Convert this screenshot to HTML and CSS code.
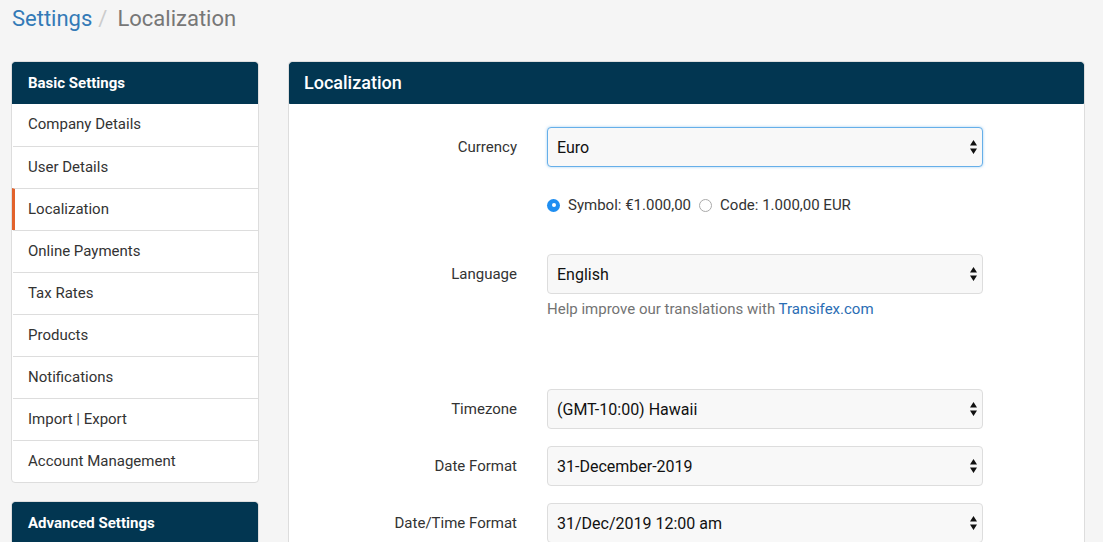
FILE: index.html
```html
<!DOCTYPE html>
<html>
<head>
<meta charset="utf-8">
<link rel="stylesheet" href="styles.css">
</head>
<body>
<div class="page">
  <h1 class="breadcrumb"><a class="crumb-link">Settings</a><span class="sep">/</span><span class="crumb-current">Localization</span></h1>
  <div class="layout">
    <aside class="sidebar">
      <div class="nav-panel">
        <div class="panel-heading">Basic Settings</div>
        <ul class="nav-list">
          <li class="nav-item">Company Details</li>
          <li class="nav-item">User Details</li>
          <li class="nav-item active">Localization</li>
          <li class="nav-item">Online Payments</li>
          <li class="nav-item">Tax Rates</li>
          <li class="nav-item">Products</li>
          <li class="nav-item">Notifications</li>
          <li class="nav-item">Import | Export</li>
          <li class="nav-item">Account Management</li>
        </ul>
      </div>
      <div class="nav-panel">
        <div class="panel-heading">Advanced Settings</div>
      </div>
    </aside>
    <main class="main-panel">
      <div class="panel-heading main-heading">Localization</div>
      <div class="panel-body">
        <div class="row row-currency">
          <label class="label">Currency</label>
          <div class="control">
            <div class="select focused"><span class="select-text">Euro</span><svg class="arrows" width="7" height="14" viewBox="0 0 7 14"><path d="M3.5 0 L7 5.5 H0 Z M0 8.5 H7 L3.5 14 Z" fill="#111"/></svg></div>
          </div>
        </div>
        <div class="row row-radio">
          <div class="label"></div>
          <div class="control radios">
            <span class="radio checked"></span><span class="radio-text">Symbol: €1.000,00</span>
            <span class="radio"></span><span class="radio-text">Code: 1.000,00 EUR</span>
          </div>
        </div>
        <div class="row row-language">
          <label class="label">Language</label>
          <div class="control">
            <div class="select"><span class="select-text">English</span><svg class="arrows" width="7" height="14" viewBox="0 0 7 14"><path d="M3.5 0 L7 5.5 H0 Z M0 8.5 H7 L3.5 14 Z" fill="#111"/></svg></div>
          </div>
        </div>
        <div class="row row-help">
          <div class="label"></div>
          <div class="control help">Help improve our translations with <a class="link">Transifex.com</a></div>
        </div>
        <div class="row row-timezone">
          <label class="label">Timezone</label>
          <div class="control">
            <div class="select"><span class="select-text">(GMT-10:00) Hawaii</span><svg class="arrows" width="7" height="14" viewBox="0 0 7 14"><path d="M3.5 0 L7 5.5 H0 Z M0 8.5 H7 L3.5 14 Z" fill="#111"/></svg></div>
          </div>
        </div>
        <div class="row row-date">
          <label class="label">Date Format</label>
          <div class="control">
            <div class="select"><span class="select-text">31-December-2019</span><svg class="arrows" width="7" height="14" viewBox="0 0 7 14"><path d="M3.5 0 L7 5.5 H0 Z M0 8.5 H7 L3.5 14 Z" fill="#111"/></svg></div>
          </div>
        </div>
        <div class="row row-datetime">
          <label class="label">Date/Time Format</label>
          <div class="control">
            <div class="select"><span class="select-text">31/Dec/2019 12:00 am</span><svg class="arrows" width="7" height="14" viewBox="0 0 7 14"><path d="M3.5 0 L7 5.5 H0 Z M0 8.5 H7 L3.5 14 Z" fill="#111"/></svg></div>
          </div>
        </div>
      </div>
    </main>
  </div>
</div>
</body>
</html>
```

FILE: styles.css
```css
html, body {
  margin: 0;
  padding: 0;
  background: #f5f5f5;
  font-family: Roboto, "Liberation Sans", Arial, sans-serif;
  color: #333;
  height: 542px;
  overflow: hidden;
}

.page {
  padding: 0 18px 0 11px;
}

.breadcrumb {
  margin: 0;
  padding: 5px 0 0 1px;
  height: 61px;
  box-sizing: border-box;
  font-size: 22px;
  font-weight: 400;
  line-height: 28px;
}

.crumb-link {
  color: #337ab7;
}

.sep {
  color: #ccc;
  padding: 0 10px 0 6px;
}

.crumb-current {
  color: #777;
}

.layout {
  display: flex;
  gap: 29px;
  align-items: flex-start;
}

.sidebar {
  width: 248px;
  flex: none;
  display: flex;
  flex-direction: column;
  gap: 18px;
}

.nav-panel {
  background: #fff;
  border: 1px solid #ddd;
  border-radius: 4px;
  overflow: hidden;
}

.panel-heading {
  background: #023651;
  color: #fff;
  font-weight: 700;
  font-size: 15px;
  height: 41px;
  line-height: 41px;
  padding-left: 15px;
  border: 1px solid #023651;
  border-bottom: none;
  border-radius: 3px 3px 0 0;
}

.nav-list {
  list-style: none;
  margin: 0;
  padding: 0;
}

.nav-item {
  height: 41px;
  line-height: 41px;
  padding-left: 15px;
  font-size: 15px;
  color: #333;
  border-top: 1px solid #ddd;
  margin-left: 1px;
}

.nav-item:first-child {
  border-top: none;
  height: 42px;
}

.nav-item.active {
  border-left: 3px solid #e2622c;
  margin-left: 0;
  padding-left: 13px;
}

.main-panel {
  flex: 1;
  background: #fff;
  border: 1px solid #ddd;
  border-radius: 4px;
  height: 560px;
  overflow: hidden;
}

.main-heading {
  font-size: 18px;
  font-weight: 500;
  height: 40px;
  line-height: 40px;
  padding-left: 14px;
  border-bottom: 1px solid #023651;
}

.panel-body {
  padding-top: 23px;
}

.row {
  display: flex;
  align-items: center;
  gap: 30px;
}

.label {
  width: 228px;
  flex: none;
  text-align: right;
  font-size: 15px;
  color: #333;
}

.control {
  width: 436px;
  flex: none;
}

.select {
  height: 40px;
  box-sizing: border-box;
  border: 1px solid #ddd;
  border-radius: 4px;
  background: #f8f8f8;
  display: flex;
  align-items: center;
  justify-content: space-between;
  padding: 0 5px 0 9px;
  font-size: 16px;
  color: #111;
}

.select.focused {
  border-color: #66afe9;
  box-shadow: 0 0 3px rgba(102, 175, 233, 0.6);
}

.row-radio {
  margin-top: 28px;
  height: 20px;
}

.radios {
  display: flex;
  align-items: center;
  font-size: 15px;
  color: #333;
}

.radio {
  width: 13px;
  height: 13px;
  border-radius: 50%;
  border: 1px solid #aaa;
  box-sizing: border-box;
  margin: 0 8px 0 0;
  background: #fff;
  position: relative;
}

.radio.checked {
  border: none;
  background: #1f8ef1;
}

.radio.checked::after {
  content: "";
  position: absolute;
  width: 4px;
  height: 4px;
  border-radius: 50%;
  background: #fff;
  left: 4.5px;
  top: 4.5px;
}

.radio-text {
  margin-right: 8px;
}

.row-language {
  margin-top: 39px;
}

.row-help {
  margin-top: 5px;
  height: 20px;
}

.help {
  font-size: 15px;
  color: #737373;
}

.link {
  color: #2a6db4;
}

.row-timezone {
  margin-top: 70px;
}

.row-date,
.row-datetime {
  margin-top: 17px;
}
```
